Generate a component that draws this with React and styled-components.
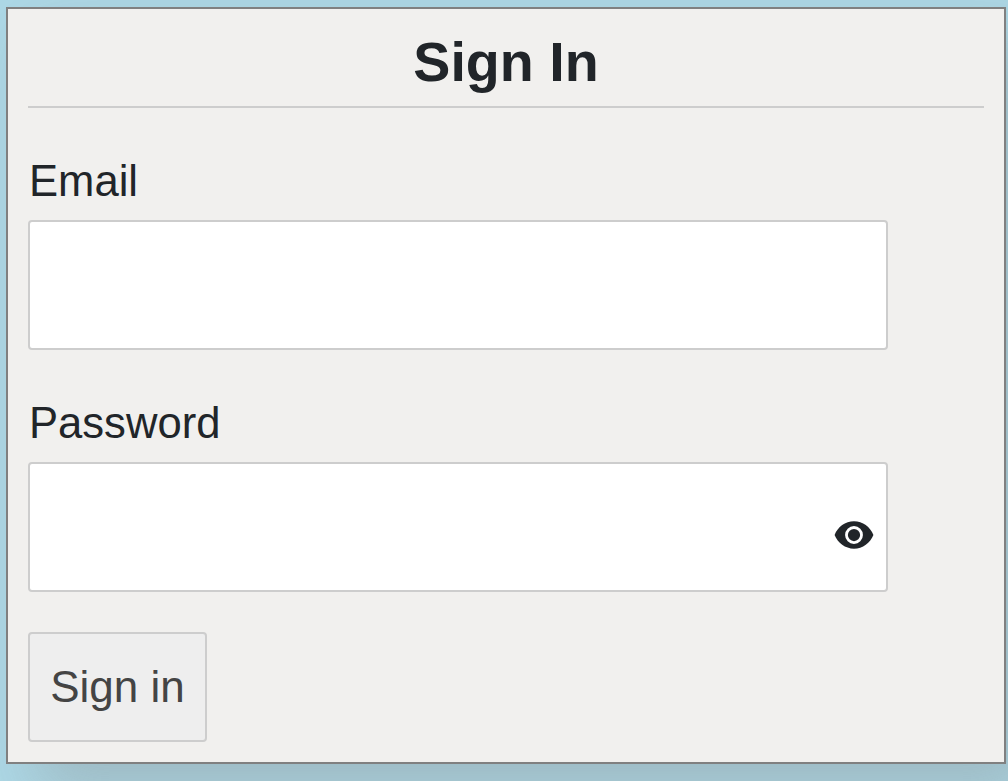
import React from 'react';
import styled, { createGlobalStyle } from 'styled-components';

const GlobalStyle = createGlobalStyle`
  html, body {
    margin: 0;
    height: 100%;
  }
  body {
    background: #add8e6;
    font-family: "Liberation Sans", Arial, sans-serif;
    color: #212529;
    overflow: hidden;
  }
`;

const Page = styled.div`
  padding: 7px 2px 0 6px;
`;

const Card = styled.main`
  box-sizing: border-box;
  height: 757px;
  padding: 0 20px;
  background: #f1f0ee;
  border: 2px solid #808080;
  box-shadow: 30px 30px 60px rgba(128, 128, 128, 0.35);
`;

const Title = styled.h1`
  margin: 0 0 40px;
  height: 97px;
  font-size: 55.6px;
  line-height: 106px;
  font-weight: 700;
  text-align: center;
  border-bottom: 2px solid #cdcdcd;
`;

const Field = styled.div`
  margin-bottom: 40px;
`;

const Label = styled.label`
  display: block;
  height: 72px;
  padding-left: 1px;
  font-size: 43.6px;
  line-height: 66px;
`;

const InputWrap = styled.div`
  position: relative;
  width: 860px;
`;

const Input = styled.input`
  display: block;
  box-sizing: border-box;
  width: 100%;
  height: 130px;
  padding: 0 20px;
  background: #fff;
  border: 2px solid #cdcdcd;
  border-radius: 4px;
  font: inherit;
  font-size: 43px;
  outline: none;
`;

const EyeButton = styled.button`
  position: absolute;
  right: 13px;
  top: 50%;
  display: flex;
  margin-top: -13px;
  padding: 0;
  background: none;
  border: none;
  color: #212529;
`;

const SubmitButton = styled.button`
  display: block;
  box-sizing: border-box;
  width: 179px;
  height: 110px;
  padding: 0;
  background: #eee;
  border: 2px solid #cdcdcd;
  border-radius: 4px;
  color: #444;
  font-family: inherit;
  font-size: 44px;
`;

const EyeIcon = () => (
  <svg viewBox="0 0 24 24" width="42" height="42" fill="currentColor" fillRule="evenodd">
    <path d="M12 4.200C7 4.200 2.700 7.500 .9 12c1.800 4.500 6.100 7.800 11.100 7.800s9.300-3.300 11.100-7.800C21.300 7.500 17 4.200 12 4.200zM12 17.100a5.100 5.100 0 1 1 0-10.200 5.100 5.100 0 0 1 0 10.200zM12 15.500a3.500 3.500 0 1 0 0-7 3.500 3.500 0 0 0 0 7z" />
  </svg>
);

const App = () => {
  return (
    <Page>
      <GlobalStyle />
      <Card>
        <Title>Sign In</Title>
        <Field>
          <Label htmlFor="email">Email</Label>
          <InputWrap>
            <Input id="email" type="email" />
          </InputWrap>
        </Field>
        <Field>
          <Label htmlFor="password">Password</Label>
          <InputWrap>
            <Input id="password" type="password" />
            <EyeButton type="button" aria-label="Show password">
              <EyeIcon />
            </EyeButton>
          </InputWrap>
        </Field>
        <SubmitButton type="submit">Sign in</SubmitButton>
      </Card>
    </Page>
  );
};

export default App;
